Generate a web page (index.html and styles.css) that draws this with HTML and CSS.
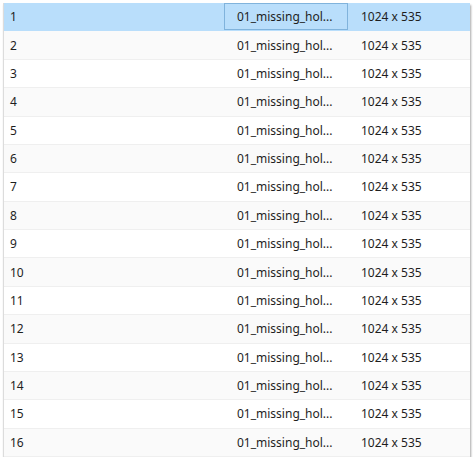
FILE: index.html
```html
<!DOCTYPE html>
<html>
<head>
<meta charset="utf-8">
<link rel="stylesheet" href="styles.css">
</head>
<body>
<div class="grid">
  <div class="row selected"><div class="c1">1</div><div class="c2 focus">01_missing_hol...</div><div class="c3">1024 x 535</div></div>
  <div class="row"><div class="c1">2</div><div class="c2">01_missing_hol...</div><div class="c3">1024 x 535</div></div>
  <div class="row"><div class="c1">3</div><div class="c2">01_missing_hol...</div><div class="c3">1024 x 535</div></div>
  <div class="row"><div class="c1">4</div><div class="c2">01_missing_hol...</div><div class="c3">1024 x 535</div></div>
  <div class="row"><div class="c1">5</div><div class="c2">01_missing_hol...</div><div class="c3">1024 x 535</div></div>
  <div class="row"><div class="c1">6</div><div class="c2">01_missing_hol...</div><div class="c3">1024 x 535</div></div>
  <div class="row"><div class="c1">7</div><div class="c2">01_missing_hol...</div><div class="c3">1024 x 535</div></div>
  <div class="row"><div class="c1">8</div><div class="c2">01_missing_hol...</div><div class="c3">1024 x 535</div></div>
  <div class="row"><div class="c1">9</div><div class="c2">01_missing_hol...</div><div class="c3">1024 x 535</div></div>
  <div class="row"><div class="c1">10</div><div class="c2">01_missing_hol...</div><div class="c3">1024 x 535</div></div>
  <div class="row"><div class="c1">11</div><div class="c2">01_missing_hol...</div><div class="c3">1024 x 535</div></div>
  <div class="row"><div class="c1">12</div><div class="c2">01_missing_hol...</div><div class="c3">1024 x 535</div></div>
  <div class="row"><div class="c1">13</div><div class="c2">01_missing_hol...</div><div class="c3">1024 x 535</div></div>
  <div class="row"><div class="c1">14</div><div class="c2">01_missing_hol...</div><div class="c3">1024 x 535</div></div>
  <div class="row"><div class="c1">15</div><div class="c2">01_missing_hol...</div><div class="c3">1024 x 535</div></div>
  <div class="row"><div class="c1">16</div><div class="c2">01_missing_hol...</div><div class="c3">1024 x 535</div></div>
</div>
</body>
</html>
```
FILE: styles.css
```css
html, body {
  margin: 0;
  padding: 0;
  background: #ffffff;
}
body {
  padding: 3px 0 0 3px;
  font-family: "Noto Sans", "Open Sans", sans-serif;
  font-size: 12px;
  color: #1e1e1e;
}
.grid {
  width: 466px;
  display: flex;
  flex-direction: column;
  border-left: 1px solid #dcdcdc;
  box-shadow: 1px 2px 2px rgba(0,0,0,0.35);
  background: #ffffff;
}
.row {
  display: grid;
  grid-template-columns: 220px 124px 1fr;
  height: 28.375px;
  align-items: stretch;
  border-bottom: 1px solid #efefef;
  box-sizing: border-box;
}
.row:nth-child(even) {
  background: #fafafa;
}
.row.selected {
  background: #b9defb;
  border-bottom-color: #b9defb;
}
.c1, .c2, .c3 {
  display: flex;
  align-items: center;
  white-space: nowrap;
}
.c1 { padding-left: 6px; }
.c2 { padding-left: 13px; }
.c3 { padding-left: 13px; }
.focus {
  border: 1px solid #80b3dc;
  padding-left: 12px;
  box-sizing: border-box;
}
```
